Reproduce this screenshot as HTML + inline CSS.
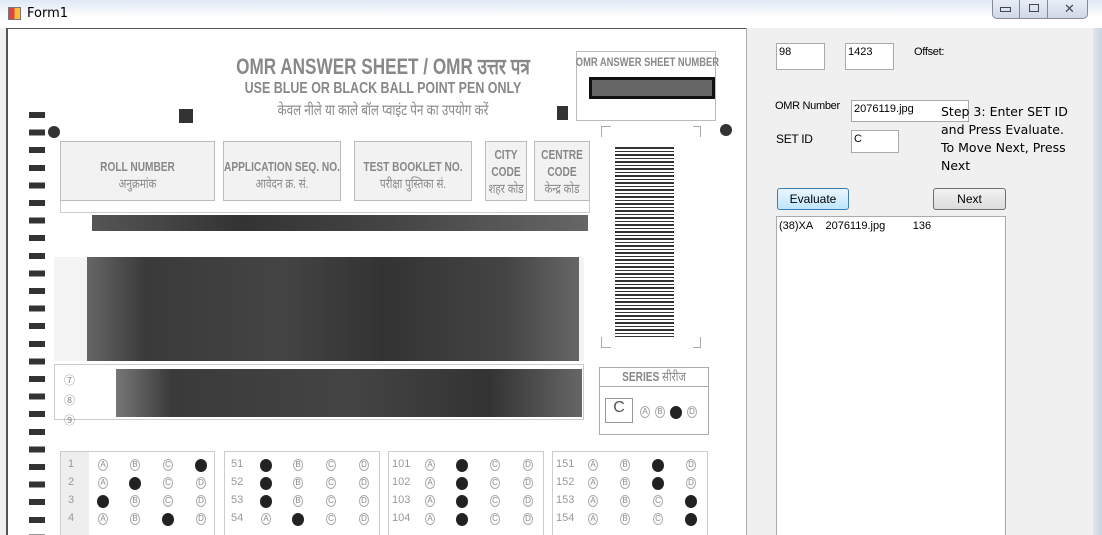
<!DOCTYPE html><html><head><style>
*{margin:0;padding:0;box-sizing:border-box}
html,body{width:1102px;height:535px;overflow:hidden}
body{background:#f0f0f0;font-family:"Liberation Sans",sans-serif;position:relative}
.a{position:absolute}
.tb{left:0;top:0;width:1102px;height:28px;background:linear-gradient(#dfe9f5,#fff 60%);}
.sheet{left:6px;top:28px;width:740px;height:507px;background:#fff;border-left:2px solid #555;border-top:1px solid #555;overflow:hidden}
.gt{color:#888;font-family:"Liberation Sans","Noto Sans CJK SC",sans-serif;text-align:center;white-space:nowrap;font-weight:bold}
.cx{transform:scaleX(.78);transform-origin:center}
.hb{border:1px solid #bbb;background:#f2f2f2}
.bub{width:10px;height:12px;border:1px solid #aaa;border-radius:50%;font-size:8px;color:#888;text-align:center;line-height:10px;margin-left:-5px;margin-top:-6px}
.f{background:#222;border-color:#222;color:transparent;width:12px;height:13px;margin-left:-6px}
.n{font-size:11px;color:#999;margin-top:-7px}
.win{border:1px solid #aaa;background:#fff;font-size:11px;padding:2px 2px;height:26px}
.lbl{font-size:12px;color:#000;letter-spacing:-0.3px}
.btn{border:1px solid #707070;border-radius:3px;background:linear-gradient(#f2f2f2,#dcdcdc);font-size:12px;text-align:center;line-height:20px;height:22px}
</style></head><body>
<div class="a tb"></div>
<div class="a" style="left:8px;top:7px;width:13px;height:13px;background:linear-gradient(90deg,#d44 50%,#fb3 50%);border:1px solid #777"></div>
<div class="a" style="left:27px;top:6px;font-size:13px;font-family:'DejaVu Sans',sans-serif;">Form1</div>
<div class="a" style="left:992px;top:0;width:96px;height:19px;border:1px solid #889;border-top:none;border-radius:0 0 5px 5px;background:linear-gradient(#e8eef6,#cfd9e6)"></div>
<div class="a" style="left:1019px;top:0;width:1px;height:19px;background:#889"></div>
<div class="a" style="left:1047px;top:0;width:1px;height:19px;background:#889"></div>
<div class="a" style="left:1000px;top:7px;width:11px;height:5px;border:1px solid #445;"></div>
<div class="a" style="left:1029px;top:4px;width:10px;height:8px;border:1px solid #445;"></div>
<div class="a" style="left:1064px;top:1px;font-size:13px;color:#445">✕</div>

<div class="a sheet">
 <div class="a gt cx" style="left:155px;top:22px;width:440px;font-size:22px;">OMR ANSWER SHEET / OMR उत्तर पत्र</div>
 <div class="a gt cx" style="left:155px;top:51px;width:440px;font-size:16px;">USE BLUE OR BLACK BALL POINT PEN ONLY</div>
 <div class="a gt cx" style="left:155px;top:71px;width:440px;font-size:15px;font-weight:normal">केवल नीले या काले बॉल प्वाइंट पेन का उपयोग करें</div>
 <div class="a" style="left:171px;top:80px;width:14px;height:14px;background:#333"></div>
 <div class="a" style="left:549px;top:77px;width:11px;height:14px;background:#333"></div>
 <div class="a" style="left:40px;top:97px;width:12px;height:12px;border-radius:50%;background:#333"></div>
 <div class="a" style="left:712px;top:95px;width:12px;height:12px;border-radius:50%;background:#333"></div>
 <div class="a" style="left:568px;top:22px;width:140px;height:70px;border:1px solid #bbb"></div>
 <div class="a gt cx" style="left:548px;top:26px;width:180px;font-size:12px;">OMR ANSWER SHEET NUMBER</div>
 <div class="a" style="left:581px;top:48px;width:126px;height:22px;border:3px solid #111;background:#666"></div>
 <div class="a hb" style="left:52px;top:112px;width:155px;height:60px"></div>
 <div class="a gt cx" style="left:32px;top:130px;width:195px;font-size:13px">ROLL NUMBER<br><span style="font-weight:normal">अनुक्रमांक</span></div>
 <div class="a hb" style="left:215px;top:112px;width:118px;height:60px"></div>
 <div class="a gt cx" style="left:184px;top:130px;width:180px;font-size:13px">APPLICATION SEQ. NO.<br><span style="font-weight:normal">आवेदन क्र. सं.</span></div>
 <div class="a hb" style="left:346px;top:112px;width:118px;height:60px"></div>
 <div class="a gt cx" style="left:315px;top:130px;width:180px;font-size:13px">TEST BOOKLET NO.<br><span style="font-weight:normal">परीक्षा पुस्तिका सं.</span></div>
 <div class="a hb" style="left:477px;top:112px;width:42px;height:60px"></div>
 <div class="a gt cx" style="left:468px;top:117px;width:60px;font-size:13px;line-height:17px">CITY<br>CODE<br><span style="font-weight:normal">शहर कोड</span></div>
 <div class="a hb" style="left:526px;top:112px;width:56px;height:60px"></div>
 <div class="a gt cx" style="left:514px;top:117px;width:80px;font-size:13px;line-height:17px">CENTRE<br>CODE<br><span style="font-weight:normal">केन्द्र कोड</span></div>
 <div class="a" style="left:52px;top:172px;width:530px;height:12px;border:1px solid #ccc;border-top:none"></div>
 <div class="a" style="left:84px;top:186px;width:496px;height:16px;background:linear-gradient(90deg,#555,#333 30%,#444 60%,#666)"></div>
 <div class="a" style="left:46px;top:228px;width:530px;height:104px;background:#f4f4f4"></div>
 <div class="a" style="left:79px;top:228px;width:492px;height:104px;background:linear-gradient(90deg,#666,#3a3a3a 12%,#444 40%,#333 60%,#444 85%,#666)"></div>
 <div class="a" style="left:46px;top:335px;width:530px;height:56px;border:1px solid #ccc"></div>
 <div class="a gt" style="left:56px;top:342px;font-size:11px;line-height:20px;font-weight:normal">⑦<br>⑧<br>⑨</div>
 <div class="a" style="left:108px;top:340px;width:466px;height:48px;background:linear-gradient(90deg,#777,#3a3a3a 12%,#444 50%,#333 80%,#666)"></div>
 <div class="a" style="left:593px;top:97px;width:100px;height:222px;border:1px solid #aaa"></div>
 <div class="a" style="left:603px;top:92px;width:82px;height:235px;background:#fff"></div>
 <div class="a" style="left:588px;top:108px;width:110px;height:200px;background:#fff"></div>
 <div class="a" style="left:607px;top:118px;width:59px;height:190px;background:repeating-linear-gradient(#333 0 2px,#fff 2px 4px,#333 4px 5px,#fff 5px 7px)"></div>
 <div class="a" style="left:591px;top:338px;width:110px;height:68px;border:1px solid #aaa"></div>
 <div class="a gt cx" style="left:576px;top:338px;width:140px;height:20px;font-size:13px;line-height:20px">SERIES <span style="font-weight:normal">सीरीज</span></div>
 <div class="a" style="left:591px;top:357px;width:110px;height:1px;background:#aaa"></div>
 <div class="a" style="left:597px;top:369px;width:28px;height:25px;border:1px solid #999;font-size:16px;color:#555;text-align:center">C</div>
 <div class="a bub" style="left:637px;top:383px">A</div><div class="a bub" style="left:652px;top:383px">B</div><div class="a bub f" style="left:668px;top:383px">C</div><div class="a bub" style="left:684px;top:383px">D</div>

 <div class="a" style="left:52px;top:422px;width:155px;height:100px;border:1px solid #ccc;background:linear-gradient(90deg,#eee 28px,#fff 28px)"></div>
 <div class="a" style="left:216px;top:422px;width:156px;height:100px;border:1px solid #ccc"></div>
 <div class="a" style="left:380px;top:422px;width:156px;height:100px;border:1px solid #ccc"></div>
 <div class="a" style="left:544px;top:422px;width:156px;height:100px;border:1px solid #ccc"></div>
</div>

<div class="a" style="left:29px;top:112px;width:16px;height:423px;background:repeating-linear-gradient(#333 0 6px,transparent 6px 17.6px)"></div>

<div class="a" style="left:0;top:0">
<div class="a" style="top:465px;left:0">
<span class="a n" style="left:68px">1</span><span class="a bub" style="left:103px">A</span><span class="a bub" style="left:135px">B</span><span class="a bub" style="left:168px">C</span><span class="a bub f" style="left:201px">D</span>
<span class="a n" style="left:231px">51</span><span class="a bub f" style="left:266px">A</span><span class="a bub" style="left:298px">B</span><span class="a bub" style="left:331px">C</span><span class="a bub" style="left:364px">D</span>
<span class="a n" style="left:392px">101</span><span class="a bub" style="left:430px">A</span><span class="a bub f" style="left:462px">B</span><span class="a bub" style="left:495px">C</span><span class="a bub" style="left:528px">D</span>
<span class="a n" style="left:556px">151</span><span class="a bub" style="left:593px">A</span><span class="a bub" style="left:625px">B</span><span class="a bub f" style="left:658px">C</span><span class="a bub" style="left:691px">D</span>
</div>
<div class="a" style="top:483px;left:0">
<span class="a n" style="left:68px">2</span><span class="a bub" style="left:103px">A</span><span class="a bub f" style="left:135px">B</span><span class="a bub" style="left:168px">C</span><span class="a bub" style="left:201px">D</span>
<span class="a n" style="left:231px">52</span><span class="a bub f" style="left:266px">A</span><span class="a bub" style="left:298px">B</span><span class="a bub" style="left:331px">C</span><span class="a bub" style="left:364px">D</span>
<span class="a n" style="left:392px">102</span><span class="a bub" style="left:430px">A</span><span class="a bub f" style="left:462px">B</span><span class="a bub" style="left:495px">C</span><span class="a bub" style="left:528px">D</span>
<span class="a n" style="left:556px">152</span><span class="a bub" style="left:593px">A</span><span class="a bub" style="left:625px">B</span><span class="a bub f" style="left:658px">C</span><span class="a bub" style="left:691px">D</span>
</div>
<div class="a" style="top:501px;left:0">
<span class="a n" style="left:68px">3</span><span class="a bub f" style="left:103px">A</span><span class="a bub" style="left:135px">B</span><span class="a bub" style="left:168px">C</span><span class="a bub" style="left:201px">D</span>
<span class="a n" style="left:231px">53</span><span class="a bub f" style="left:266px">A</span><span class="a bub" style="left:298px">B</span><span class="a bub" style="left:331px">C</span><span class="a bub" style="left:364px">D</span>
<span class="a n" style="left:392px">103</span><span class="a bub" style="left:430px">A</span><span class="a bub f" style="left:462px">B</span><span class="a bub" style="left:495px">C</span><span class="a bub" style="left:528px">D</span>
<span class="a n" style="left:556px">153</span><span class="a bub" style="left:593px">A</span><span class="a bub" style="left:625px">B</span><span class="a bub" style="left:658px">C</span><span class="a bub f" style="left:691px">D</span>
</div>
<div class="a" style="top:519px;left:0">
<span class="a n" style="left:68px">4</span><span class="a bub" style="left:103px">A</span><span class="a bub" style="left:135px">B</span><span class="a bub f" style="left:168px">C</span><span class="a bub" style="left:201px">D</span>
<span class="a n" style="left:231px">54</span><span class="a bub" style="left:266px">A</span><span class="a bub f" style="left:298px">B</span><span class="a bub" style="left:331px">C</span><span class="a bub" style="left:364px">D</span>
<span class="a n" style="left:392px">104</span><span class="a bub" style="left:430px">A</span><span class="a bub f" style="left:462px">B</span><span class="a bub" style="left:495px">C</span><span class="a bub" style="left:528px">D</span>
<span class="a n" style="left:556px">154</span><span class="a bub" style="left:593px">A</span><span class="a bub" style="left:625px">B</span><span class="a bub" style="left:658px">C</span><span class="a bub f" style="left:691px">D</span>
</div>
</div>

<div class="a" style="left:746px;top:28px;width:1px;height:507px;background:#aaa"></div>
<div class="a" style="left:1093px;top:28px;width:9px;height:507px;background:linear-gradient(90deg,#e0e6ee,#c8d4e2)"></div>
<div class="a win" style="left:776px;top:43px;width:49px;height:27px">98</div>
<div class="a win" style="left:845px;top:43px;width:49px;height:27px">1423</div>
<div class="a lbl" style="left:914px;top:46px;font-size:11px">Offset:</div>
<div class="a lbl" style="left:775px;top:100px;font-size:11px">OMR Number</div>
<div class="a win" style="left:851px;top:100px;width:118px;height:22px">2076119.jpg</div>
<div class="a lbl" style="left:776px;top:132px;font-size:12px">SET ID</div>
<div class="a win" style="left:851px;top:130px;width:48px;height:23px">C</div>
<div class="a" style="left:941px;top:103px;font-family:'DejaVu Sans',sans-serif;font-size:12.5px;line-height:18px;color:#000">Step 3: Enter SET ID<br>and Press Evaluate.<br>To Move Next, Press<br>Next</div>
<div class="a btn" style="left:777px;top:188px;width:72px;border-color:#3c7fb1;background:linear-gradient(#eaf6fd,#bee6fd)">Evaluate</div>
<div class="a btn" style="left:933px;top:188px;width:73px">Next</div>
<div class="a" style="left:776px;top:216px;width:230px;height:319px;background:#fff;border:1px solid #aaa;border-bottom:none;font-size:11px;padding:3px 2px">(38)XA&nbsp;&nbsp;&nbsp;&nbsp;2076119.jpg&nbsp;&nbsp;&nbsp;&nbsp;&nbsp;&nbsp;&nbsp;&nbsp;&nbsp;136</div>
</body></html>
